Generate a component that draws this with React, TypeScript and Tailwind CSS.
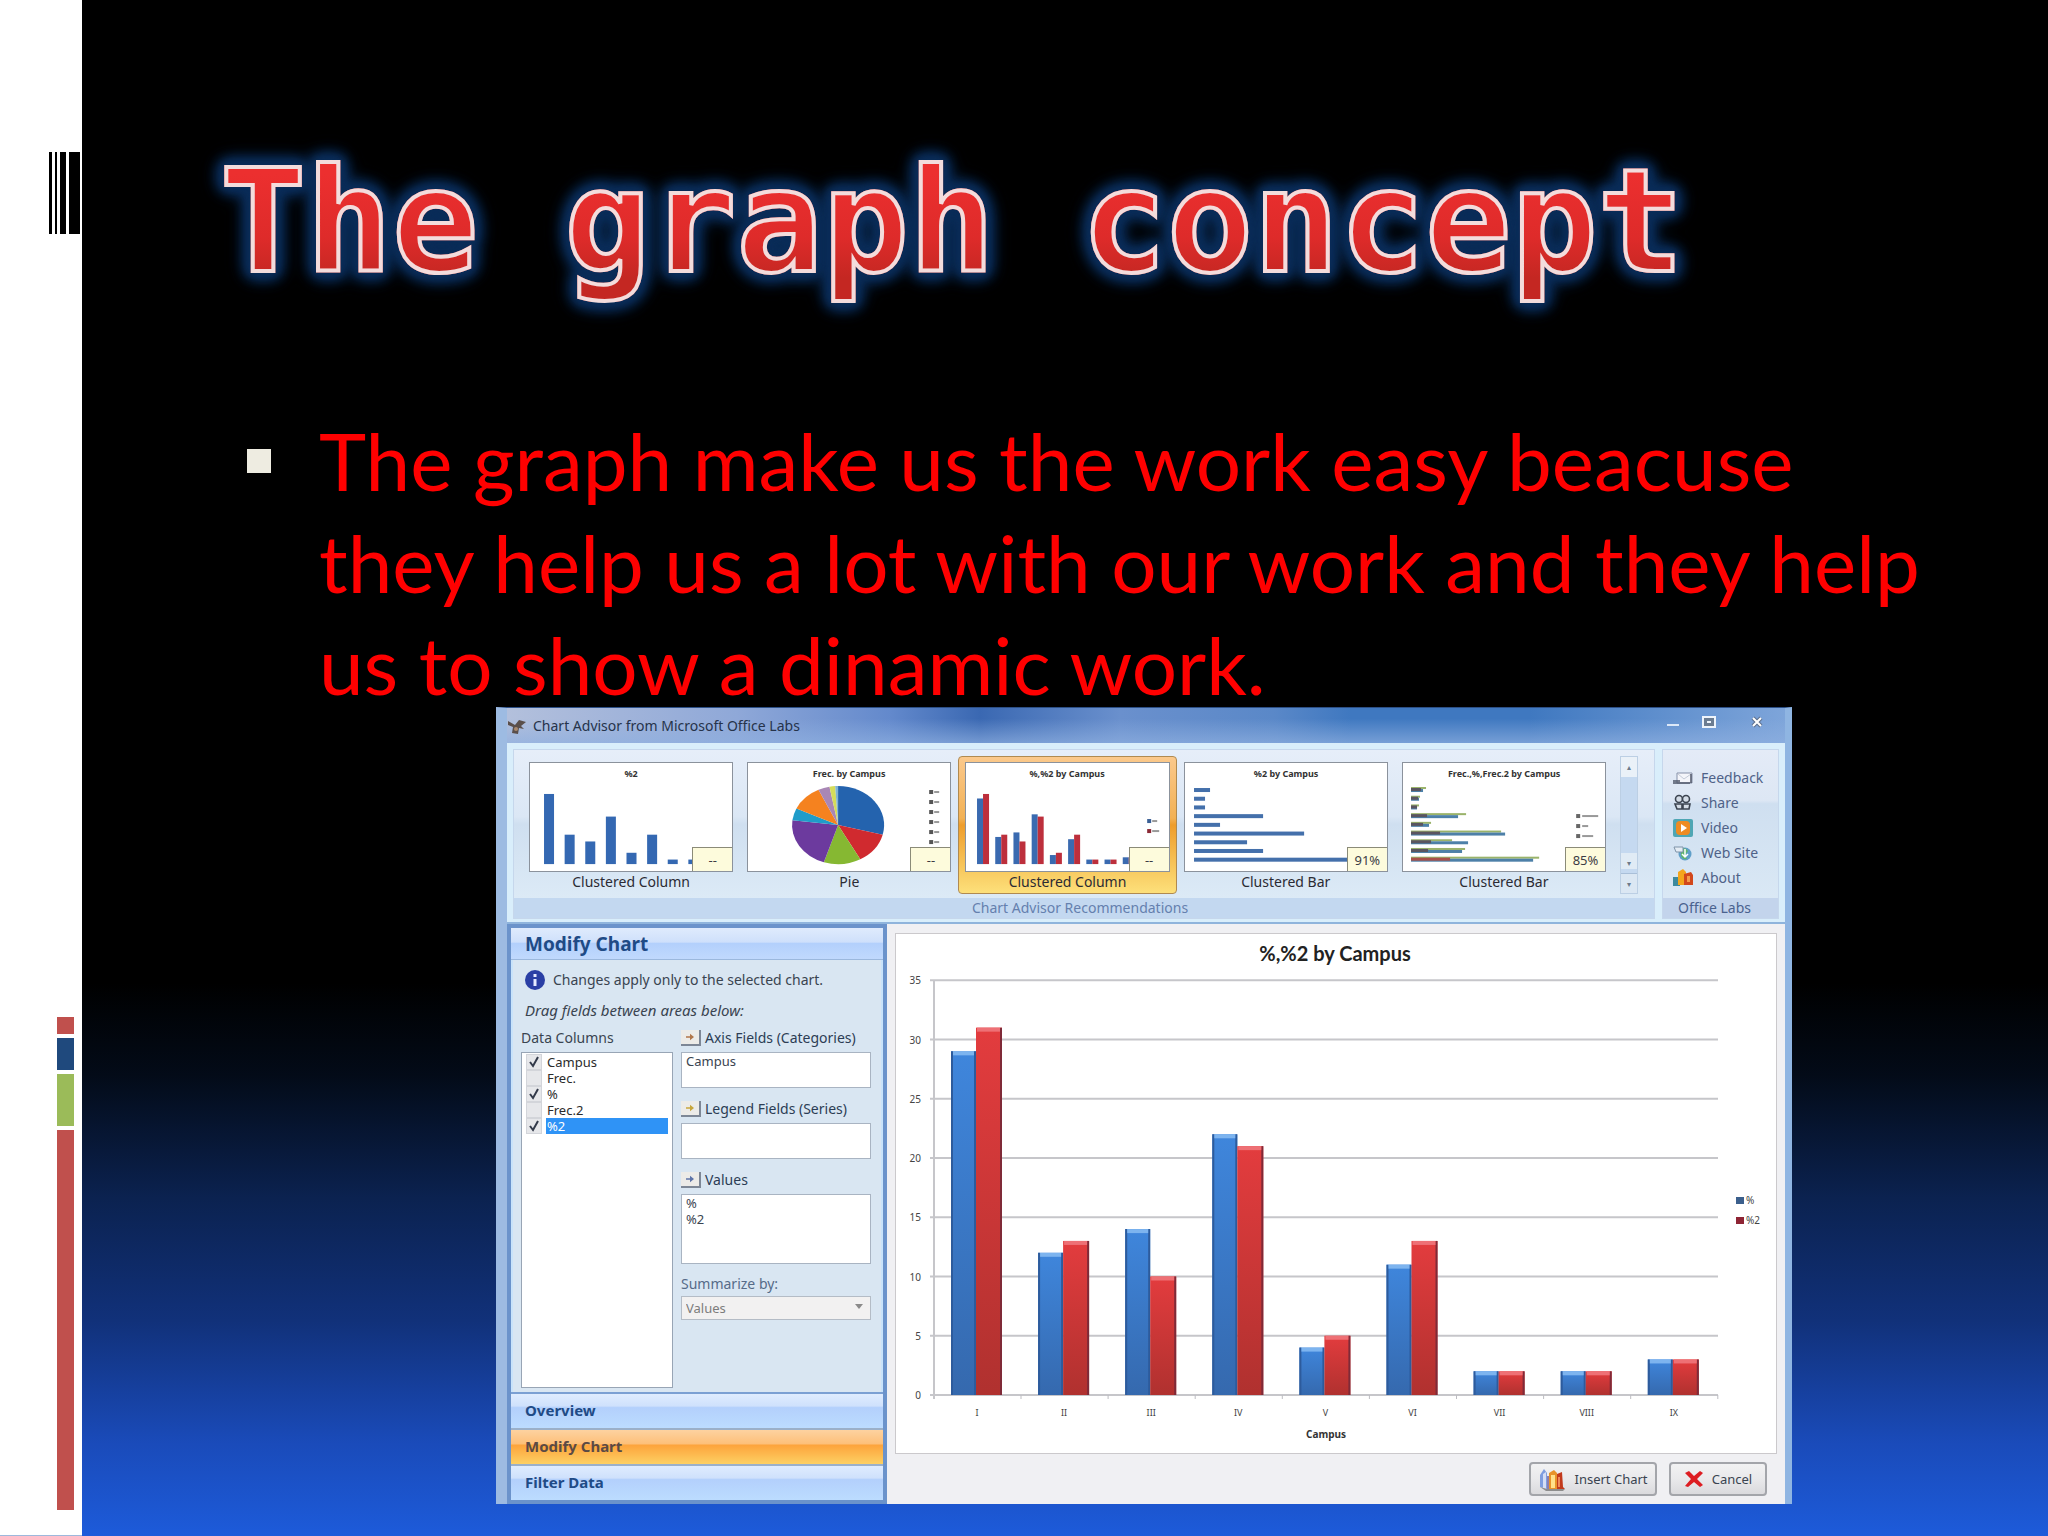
import React, { useState } from 'react';

const CATEGORIES = ['I', 'II', 'III', 'IV', 'V', 'VI', 'VII', 'VIII', 'IX'];
const PERCENT = [29, 12, 14, 22, 4, 11, 2, 2, 3];
const PERCENT_2 = [31, 13, 10, 21, 5, 13, 2, 2, 3];

const PIE_SLICES = [
  { value: 29, color: '#2463ae' },
  { value: 13, color: '#d02a2f' },
  { value: 13, color: '#86b832' },
  { value: 22, color: '#6c3a9e' },
  { value: 5, color: '#1f9cc9' },
  { value: 11, color: '#f5821f' },
  { value: 4, color: '#a987b5' },
  { value: 2, color: '#d5dc5a' },
  { value: 1, color: '#7fb3d5' },
];

const MULTI_BARS = [
  [15, 12, 10],
  [9, 8, 7],
  [8, 6, 6],
  [55, 47, 16],
  [20, 18, 12],
  [90, 94, 29],
  [41, 57, 20],
  [54, 51, 17],
  [128, 122, 39],
];

const ThumbTitle: React.FC<{ children: React.ReactNode }> = ({ children }) => (
  <text x="101" y="14" textAnchor="middle" fontSize="9" fontWeight="700" fill="#333">
    {children}
  </text>
);

const ColumnThumb = () => (
  <svg viewBox="0 0 202 108" className="block w-full">
    <ThumbTitle>%2</ThumbTitle>
    {PERCENT_2.map((v, i) => (
      <rect key={i} x={14 + i * 20.6} y={101 - v * 2.26} width="10" height={v * 2.26} fill="#3468b2" />
    ))}
  </svg>
);

const PieThumb = () => {
  let angle = 0;
  return (
    <svg viewBox="0 0 202 108" className="block w-full">
      <ThumbTitle>Frec. by Campus</ThumbTitle>
      {PIE_SLICES.map((slice, i) => {
        const start = (angle / 100) * Math.PI * 2;
        angle += slice.value;
        const end = (angle / 100) * Math.PI * 2;
        const point = (a: number) => `${90 + 46 * Math.sin(a)} ${62 - 39 * Math.cos(a)}`;
        return (
          <path
            key={i}
            d={`M90 62 L${point(start)} A46 39 0 0 1 ${point(end)} Z`}
            fill={slice.color}
          />
        );
      })}
      {[0, 1, 2, 3, 4, 5].map((i) => (
        <g key={i} fill="#555">
          <rect x="181" y={27 + i * 10} width="4" height="4" />
          <rect x="186" y={28 + i * 10} width="5" height="2" fill="#999" />
        </g>
      ))}
    </svg>
  );
};

const GroupedThumb = () => (
  <svg viewBox="0 0 202 108" className="block w-full">
    <ThumbTitle>%,%2 by Campus</ThumbTitle>
    {CATEGORIES.map((c, i) => (
      <g key={c}>
        <rect x={11 + i * 18.2} y={101 - PERCENT[i] * 2.26} width="6" height={PERCENT[i] * 2.26} fill="#3a6ab0" />
        <rect x={17 + i * 18.2} y={101 - PERCENT_2[i] * 2.26} width="6" height={PERCENT_2[i] * 2.26} fill="#bd2f3c" />
      </g>
    ))}
    <rect x="181" y="56" width="4" height="4" fill="#3a5f95" />
    <rect x="186" y="57" width="5" height="2" fill="#999" />
    <rect x="181" y="66" width="4" height="4" fill="#8b2935" />
    <rect x="186" y="67" width="7" height="2" fill="#999" />
  </svg>
);

const BarThumb = () => (
  <svg viewBox="0 0 202 108" className="block w-full">
    <ThumbTitle>%2 by Campus</ThumbTitle>
    {[16, 11, 11, 69, 26, 110, 53, 69, 160].map((w, i) => (
      <rect key={i} x="9" y={25 + i * 8.7} width={w} height="4" fill="#4470ab" />
    ))}
  </svg>
);

const MultiBarThumb = () => (
  <svg viewBox="0 0 202 108" className="block w-full">
    <ThumbTitle>Frec.,%,Frec.2 by Campus</ThumbTitle>
    {MULTI_BARS.map(([a, b, c], i) => (
      <g key={i}>
        <rect x="8" y={24 + i * 8.7} width={a} height="2" fill="#9ab36a" />
        <rect x="8" y={26 + i * 8.7} width={b} height="3" fill="#4d80a8" />
        <rect x="8" y={25 + i * 8.7} width={c} height="3" fill={i === 8 ? '#a8504a' : '#5a5560'} />
      </g>
    ))}
    {[0, 1, 2].map((i) => (
      <g key={i}>
        <rect x="173" y={51 + i * 10} width="4" height="4" fill="#666" />
        <rect x="179" y={52 + i * 10} width={[16, 6, 11][i]} height="2" fill="#999" />
      </g>
    ))}
  </svg>
);

const THUMBS = [
  { label: 'Clustered Column', badge: '--', chart: <ColumnThumb /> },
  { label: 'Pie', badge: '--', chart: <PieThumb /> },
  { label: 'Clustered Column', badge: '--', chart: <GroupedThumb /> },
  { label: 'Clustered Bar', badge: '91%', chart: <BarThumb /> },
  { label: 'Clustered Bar', badge: '85%', chart: <MultiBarThumb /> },
];

const BarsIcon: React.FC<{ className?: string }> = ({ className }) => (
  <svg viewBox="0 0 28 24" className={className}>
    <path d="M2 8 L6 2 L9 6 V22 L2 20 Z" fill="#7f9ee0" />
    <path d="M5 7 L8 5 V22 L5 21 Z" fill="#d5def5" />
    <path d="M9 9 H12 V22 H9 Z" fill="#8a7fb0" />
    <path d="M11 6 L16 3 L19 6 V22 H11 Z" fill="#e8932a" />
    <path d="M13 8 H17 V21 H13 Z" fill="#ffe08a" />
    <path d="M19 7 L24 5 L25 20 L27 22 H19 Z" fill="#c23a1c" />
    <path d="M20 10 H22 V20 H20 Z" fill="#ef8a5a" />
    <path d="M2 20 L9 22 H27 L25 24 H8 Z" fill="#8d8d8d" />
  </svg>
);

const LABS_LINKS = [
  {
    label: 'Feedback',
    icon: (
      <svg viewBox="0 0 20 20" className="size-5">
        <path d="M4 5 H19 V15 H4 Z" fill="#f4f5fa" stroke="#8590a8" />
        <path d="M5 6 L11 11 L18 6" fill="none" stroke="#c4cbd8" />
        <path d="M0 13 H7 M0 15 H17 M18 6 V15" stroke="#4d5568" strokeWidth="1.5" />
      </svg>
    ),
  },
  {
    label: 'Share',
    icon: (
      <svg viewBox="0 0 20 20" className="size-5" fill="#d4dce6" stroke="#3c4450" strokeWidth="1.6">
        <circle cx="6" cy="6" r="3.5" />
        <circle cx="13" cy="6" r="3.5" />
        <path d="M2 11 H9 V16 H4 Z M10 11 H17 L16 16 H10 Z" />
      </svg>
    ),
  },
  {
    label: 'Video',
    icon: (
      <svg viewBox="0 0 20 20" className="size-5">
        <rect x="0" y="1" width="20" height="18" rx="2" fill="#4fa6b4" />
        <rect x="3" y="3" width="14" height="14" rx="4" fill="#ee8b22" />
        <path d="M8 6 L14 10 L8 14 Z" fill="#fff" />
      </svg>
    ),
  },
  {
    label: 'Web Site',
    icon: (
      <svg viewBox="0 0 20 20" className="size-5">
        <circle cx="12" cy="11" r="6.5" fill="#5f9fc9" />
        <path d="M8 7 Q12 3 15 8 L12 12 L14 16 Q9 17 8 12 Z" fill="#5fb56b" />
        <path d="M1 4 H10 V9 H3 Z" fill="#e4ecf4" stroke="#7f93a8" />
        <path d="M12 6 V14 M9 11 L12 14 L15 11" stroke="#fff" strokeWidth="1.5" fill="none" />
      </svg>
    ),
  },
  {
    label: 'About',
    icon: (
      <svg viewBox="0 0 20 20" className="size-5">
        <path d="M0 9 H7 V18 H0 Z" fill="#3d8a9e" />
        <path d="M5 4 L10 1 L13 4 V17 H5 Z" fill="#f4a51c" />
        <path d="M11 6 L18 4 L20 7 V17 H11 Z" fill="#d2481c" />
        <path d="M14 8 H17 V14 H14 Z" fill="#f49a4a" />
      </svg>
    ),
  },
];

const CampusChart = () => {
  const y = (v: number) => 461 - v * 11.85;
  return (
    <svg viewBox="0 0 880 519" className="block h-auto w-full" role="img" aria-label="%,%2 by Campus">
      <defs>
        <linearGradient id="blue" x1="0" y1="0" x2="0" y2="1">
          <stop offset="0" stopColor="#3f86dc" />
          <stop offset="1" stopColor="#3569ae" />
        </linearGradient>
        <linearGradient id="red" x1="0" y1="0" x2="0" y2="1">
          <stop offset="0" stopColor="#e33c3e" />
          <stop offset="1" stopColor="#b0312f" />
        </linearGradient>
      </defs>
      <text x="439" y="27" textAnchor="middle" fontSize="20" fontWeight="700" fill="#222" className="font-[Lato,sans-serif]">
        %,%2 by Campus
      </text>
      {[0, 5, 10, 15, 20, 25, 30, 35].map((v) => (
        <g key={v}>
          <path d={`M34 ${y(v)} H822`} stroke="#c6c6ca" strokeWidth="2" />
          <text x="25" y={y(v) + 4} textAnchor="end" fontSize="10" fill="#444">
            {v}
          </text>
        </g>
      ))}
      <path d={`M38 ${y(35)} V${y(0) + 4}`} stroke="#c6c6ca" strokeWidth="2" />
      {CATEGORIES.map((c, i) => {
        const x = 37 + i * 87.1;
        return (
          <g key={c}>
            <path d={`M${x + 88} 461 v4`} stroke="#bdbdc2" />
            <rect x={x + 18} y={y(PERCENT[i])} width="25" height={PERCENT[i] * 11.85} fill="url(#blue)" />
            <path d={`M${x + 19} 461 V${y(PERCENT[i])} M${x + 42} 461 V${y(PERCENT[i])}`} stroke="#2d5b9c" strokeWidth="2" />
            <rect x={x + 20} y={y(PERCENT[i])} width="21" height="4" fill="#7db4ef" />
            <rect x={x + 43} y={y(PERCENT_2[i])} width="26" height={PERCENT_2[i] * 11.85} fill="url(#red)" />
            <path d={`M${x + 68} 461 V${y(PERCENT_2[i])}`} stroke="#7f2a38" strokeWidth="2" />
            <rect x={x + 44} y={y(PERCENT_2[i])} width="23" height="4" fill="#ee7075" />
            <text x={x + 44} y="482" textAnchor="middle" fontSize="9" fill="#444">
              {c}
            </text>
          </g>
        );
      })}
      <text x="430" y="504" textAnchor="middle" fontSize="10" fontWeight="700" fill="#333">
        Campus
      </text>
      <rect x="840" y="263" width="8" height="7" fill="#3b5f8c" />
      <text x="850" y="270" fontSize="10" fill="#444">%</text>
      <rect x="840" y="283" width="8" height="7" fill="#8e2434" />
      <text x="850" y="290" fontSize="10" fill="#444">%2</text>
    </svg>
  );
};

const FieldLabel: React.FC<{ id: string; arrow: string; children: React.ReactNode }> = ({ id, arrow, children }) => (
  <div className="flex h-7 items-center gap-1">
    <button type="button" aria-label="Move field" className="flex h-4 w-5 items-center justify-center border-r-2 border-b-2 border-[#7d8796] bg-[#ecebe8]">
      <svg viewBox="0 0 10 10" className="size-2">
        <path d="M0 4 H5 V1 L10 5 L5 9 V6 H0 Z" fill={arrow} />
      </svg>
    </button>
    <span id={id} className="whitespace-nowrap text-[#2c3d55]">{children}</span>
  </div>
);

const ModifyPane = () => {
  const [checked, setChecked] = useState<Record<string, boolean>>({ Campus: true, '%': true, '%2': true });

  return (
    <aside className="flex w-[380px] shrink-0 flex-col border-4 border-[#6b93cb] bg-[#d9e6f2]">
      <h2 className="h-8 border-b border-[#9bb8dd] bg-[linear-gradient(#dfebfd,#cfe0fb_45%,#b3d0fc_50%,#c0d9fd)] pl-[14px] text-[19px] leading-8 font-bold text-[#1f4b86]">
        Modify Chart
      </h2>
      <div className="flex flex-1 flex-col border-x-2 border-[#c9e3fa] px-2 pt-1 pb-1">
        <p className="flex h-8 items-center gap-2 pl-1">
          <svg viewBox="0 0 20 20" className="size-5">
            <circle cx="10" cy="10" r="10" fill="#2a3fa5" />
            <path d="M10 4 V7 M10 9 V16" stroke="#e6ebff" strokeWidth="3" />
          </svg>
          Changes apply only to the selected chart.
        </p>
        <p className="h-7 pl-1 text-[15px] leading-7 italic">Drag fields between areas below:</p>
        <div className="flex flex-1 gap-2">
          <div className="flex w-[152px] flex-col">
            <span id="data-columns" className="h-7 leading-7">Data Columns</span>
            <ul aria-labelledby="data-columns" className="min-h-[334px] flex-1 border border-[#98a5b5] bg-white px-1 py-px text-[13px]">
              {['Campus', 'Frec.', '%', 'Frec.2', '%2'].map((name) => (
                <li key={name} className="h-4">
                  <label className="flex h-4 items-center gap-1">
                    <span className="grid size-4 place-items-center">
                      <input
                        type="checkbox"
                        checked={!!checked[name]}
                        onChange={(e) => setChecked({ ...checked, [name]: e.target.checked })}
                        className="col-start-1 row-start-1 size-4 appearance-none border border-[#d3d5da] bg-[#e6e7ea]"
                      />
                      {checked[name] && (
                        <svg viewBox="0 0 12 12" className="pointer-events-none col-start-1 row-start-1 size-3">
                          <path d="M2 6 L5 10 L10 1" fill="none" stroke="#333a4a" strokeWidth="2" />
                        </svg>
                      )}
                    </span>
                    <span className={`flex-1 pl-px leading-4 ${name === '%2' ? 'bg-[#2f93f6] text-white' : 'text-[#2b2b2b]'}`}>
                      {name}
                    </span>
                  </label>
                </li>
              ))}
            </ul>
          </div>
          <div className="flex w-[190px] flex-col">
            <FieldLabel id="axis" arrow="#b0764a">Axis Fields (Categories)</FieldLabel>
            <div aria-labelledby="axis" className="h-9 border border-[#a9b4c2] bg-white px-1 text-[13px] leading-4">Campus</div>
            <div className="h-[7px]" />
            <FieldLabel id="legend" arrow="#c7a63c">Legend Fields (Series)</FieldLabel>
            <div aria-labelledby="legend" className="h-9 border border-[#a9b4c2] bg-white px-1" />
            <div className="h-[7px]" />
            <FieldLabel id="values" arrow="#5d74a8">Values</FieldLabel>
            <div aria-labelledby="values" className="h-[70px] border border-[#a9b4c2] bg-white px-1 text-[13px] leading-4">
              <p>%</p>
              <p>%2</p>
            </div>
            <label htmlFor="summarize" className="mt-2 h-6 leading-6 text-[#566b88]">Summarize by:</label>
            <div className="relative">
              <select id="summarize" disabled className="block h-6 w-full appearance-none border border-[#b4bcc6] bg-[#f2f1f1] px-1 text-[13px] text-[#7c7c7c] opacity-100">
                <option>Values</option>
              </select>
              <svg viewBox="0 0 8 5" className="pointer-events-none absolute top-2 right-2 w-2">
                <path d="M0 0 H8 L4 5 Z" fill="#8a8a8a" />
              </svg>
            </div>
          </div>
        </div>
      </div>
      <nav className="flex flex-col text-[15px] leading-5 font-bold text-[#1f4b86]">
        <button type="button" className="h-9 border-t-2 border-[#7ba0d3] bg-[linear-gradient(#dfecfe,#cfe1fc_35%,#b3d0fc_40%,#bcdcff)] pb-[2px] pl-[14px] text-left">
          Overview
        </button>
        <button type="button" className="h-9 border-t-2 border-[#9bb0c9] bg-[linear-gradient(#fdd2a0,#fdc07a_40%,#fda43c_45%,#fdd063)] pb-[2px] pl-[14px] text-left text-[#5b4a45]">
          Modify Chart
        </button>
        <button type="button" className="h-9 border-t-2 border-[#9bb0c9] bg-[linear-gradient(#dfecfe,#cfe1fc_35%,#b3d0fc_40%,#bcdcff)] pb-[2px] pl-[14px] text-left">
          Filter Data
        </button>
      </nav>
    </aside>
  );
};

const Ribbon = () => {
  const [selected, setSelected] = useState(2);

  return (
    <div className="flex gap-[7px] border-b-2 border-[#8fb4dc] bg-[#d9eefb] px-[6px] pt-[6px] pb-[3px] text-[14px] text-[#3c3c44]">
      <section className="flex flex-1 flex-col border border-[#c6d7ec] bg-[#d9e6f4]">
        <div className="flex flex-1 items-stretch bg-[linear-gradient(#e6eef9,#dbe7f5_45%,#cfdff0_50%,#dceaf6)] pt-[6px] pb-1 pl-2">
          {THUMBS.map((thumb, i) => (
            <button
              key={i}
              type="button"
              onClick={() => setSelected(i)}
              className={`flex-1 rounded-sm border px-[6px] pt-[5px] pb-px ${
                i === selected
                  ? 'border-[#b08a50] bg-[linear-gradient(#fbc98c,#f2b155_45%,#ee9d2c_50%,#fde07a)]'
                  : 'border-transparent'
              }`}
            >
              <div className="relative border border-[#8b929c] bg-white">
                {thumb.chart}
                <span className="absolute right-0 bottom-0 flex h-6 w-10 items-center justify-center border-t border-l border-[#8b8b78] bg-[#fdfbdc] text-[13px]">
                  {thumb.badge}
                </span>
              </div>
              <span className="block leading-5 text-[#2b2b33]">{thumb.label}</span>
            </button>
          ))}
          <div className="mr-4 ml-[7px] flex w-[18px] flex-col border border-[#bccfe4] bg-[#c5d9f0] text-[8px] text-[#6d7a8a]">
            <button type="button" aria-label="Scroll up" className="h-5 bg-[#eaf1f8]">▴</button>
            <div className="flex-1" />
            <button type="button" aria-label="Scroll down" className="h-4 bg-[#e0ebf5]">▾</button>
            <button type="button" aria-label="More" className="mt-1 h-5 border-t border-[#a9bfd8] bg-[#dbe7f3]">▾</button>
          </div>
        </div>
        <h2 className="h-5 bg-[#c3d8f0] pr-2 text-center leading-5 text-[#6580ae]">Chart Advisor Recommendations</h2>
      </section>
      <section className="flex w-[117px] flex-col border border-[#c6d7ec] bg-[linear-gradient(#e4ebf7,#dde7f4_30%,#cfdff0_32%,#dceaf6)]">
        <ul className="flex flex-1 flex-col justify-end pb-2 pl-[10px]">
          {LABS_LINKS.map((link) => (
            <li key={link.label}>
              <a href="#" className="flex h-[25px] items-center gap-2 whitespace-nowrap text-[#4f6288]">
                {link.icon}
                {link.label}
              </a>
            </li>
          ))}
        </ul>
        <h2 className="h-5 bg-[#c3d4ec] pr-3 text-center leading-5 text-[#4a628f]">Office Labs</h2>
      </section>
    </div>
  );
};

const ChartAdvisorWindow = () => (
  <section className="mr-[256px] ml-[414px] border-t border-r-[7px] border-l-[11px] border-t-[#2c4f86] border-r-[#8fb5e2] border-l-[#9dbbe2] bg-[#f0f0f3] font-['Noto_Sans',sans-serif] text-[14px] leading-5 text-[#3a4450]">
    <header className="flex h-[35px] items-center justify-between bg-[linear-gradient(transparent_30%,#8fb0e0b0),linear-gradient(90deg,#b3c0dc,#8fa8d8_18%,#6389cc_30%,#3a68b2_37%,#6a90cd_48%,#5a88c8_60%,#3f78c0_66%,#3f78c0_80%,#7ea5da)]">
      <h2 className="flex items-center gap-[6px] text-[14px] text-[#26334a]">
        <svg viewBox="0 0 20 18" className="h-5 w-5">
          <path d="M1 4 L8 8 L12 3 L19 5 L14 9 L17 12 L12 11 L11 17 L5 16 L6 10 L1 8 Z" fill="#5a4f4b" />
          <circle cx="9" cy="12" r="2" fill="#a9896e" />
        </svg>
        Chart Advisor from Microsoft Office Labs
      </h2>
      <div className="mb-2 flex items-center text-white">
        <button type="button" aria-label="Minimize" className="flex w-8 justify-center">
          <svg viewBox="0 0 12 12" className="size-3"><path d="M0 9 H12" stroke="#dce8f8" strokeWidth="2" /></svg>
        </button>
        <button type="button" aria-label="Maximize" className="flex w-10 justify-center">
          <svg viewBox="0 0 14 12" className="h-3 w-[14px]"><path d="M1 1 H13 V11 H1 Z" fill="#6c7d92" stroke="#eef4fb" strokeWidth="2" /><path d="M5 5 H9 V7 H5 Z" fill="#eef4fb" /></svg>
        </button>
        <button type="button" aria-label="Close" className="flex w-14 justify-center">
          <svg viewBox="0 0 12 12" className="size-3"><path d="M2 2 L10 10 M10 2 L2 10" stroke="#5d6f8c" strokeWidth="4" /><path d="M2 2 L10 10 M10 2 L2 10" stroke="#fff" strokeWidth="2" /></svg>
        </button>
      </div>
    </header>
    <Ribbon />
    <div className="flex">
      <ModifyPane />
      <div className="flex flex-1 flex-col pt-[9px] pr-2 pl-2">
        <div className="border border-[#cbc9cc] bg-white">
          <CampusChart />
        </div>
        <div className="flex justify-end gap-3 pt-2 pr-[10px] pb-2 text-[13px]">
          <button type="button" className="flex h-[34px] w-32 items-center justify-center gap-2 rounded-sm border-2 border-[#a3a5aa] bg-[linear-gradient(#f2f2f3,#e9e9eb_50%,#dadadd)]">
            <BarsIcon className="h-6 w-7" />
            Insert Chart
          </button>
          <button type="button" className="flex h-[34px] w-[98px] items-center justify-center gap-2 rounded-sm border-2 border-[#a3a5aa] bg-[linear-gradient(#f2f2f3,#e9e9eb_50%,#dadadd)]">
            <svg viewBox="0 0 20 18" className="h-[18px] w-5">
              <path d="M1 3 L5 1 L10 6 L16 1 L19 3 L13 9 L19 15 L16 17 L10 12 L4 17 L1 16 L7 9 Z" fill="#dd1d22" />
            </svg>
            Cancel
          </button>
        </div>
      </div>
    </div>
  </section>
);

const SideStrip = () => (
  <div className="flex w-[82px] shrink-0 flex-col justify-between border-b border-[#9db8dc] bg-white pt-[152px] pb-[25px]">
    <div className="ml-[49px] flex h-[82px] gap-[3px]">
      <span className="w-[3px] bg-black" />
      <span className="w-[2px] bg-black" />
      <span className="w-[6px] bg-black" />
      <span className="w-[11px] bg-black" />
    </div>
    <div className="ml-[57px] flex w-[17px] flex-col gap-1">
      <span className="h-[17px] bg-[#c0504d]" />
      <span className="h-8 bg-[#1f497d]" />
      <span className="h-[52px] bg-[#9bbb59]" />
      <span className="h-[380px] bg-[#c0504d]" />
    </div>
  </div>
);

const App: React.FC = () => {
  return (
    <div className="flex min-h-screen bg-[linear-gradient(#000_0%,#000_64%,#030b18_70%,#0b2250_78%,#11317a_86%,#1a4bba_94%,#1d5bda_100%)]">
      <SideStrip />
      <main className="min-w-0 flex-1 pt-[142px] pb-8">
        <h1 className="ml-[138px] w-fit bg-[linear-gradient(#ec2f2f_20%,#de2b2a_60%,#c42722_85%)] bg-clip-text font-['DejaVu_Sans_Mono',monospace] text-[143px] leading-[160px] font-bold whitespace-nowrap text-transparent [-webkit-text-stroke:4px_#f3dcdc] [filter:drop-shadow(0_0_4px_#0a2c58)_drop-shadow(0_0_6px_#0a2c58)_drop-shadow(0_0_6px_#0a2c58)_drop-shadow(0_0_6px_#0a2c58)]">
          The graph concept
        </h1>
        <ul className="mt-[107px] pr-[120px] pl-[165px] font-[Lato,sans-serif] text-[80px] leading-[102px] text-[#ff0000]">
          <li className="flex gap-12">
            <span className="mt-10 size-6 shrink-0 bg-[#eeece1]" />
            <p>The graph make us the work easy beacuse they help us a lot with our work and they help us to show a dinamic work.</p>
          </li>
        </ul>
        <div className="-mt-2">
          <ChartAdvisorWindow />
        </div>
      </main>
    </div>
  );
};

export default App;
